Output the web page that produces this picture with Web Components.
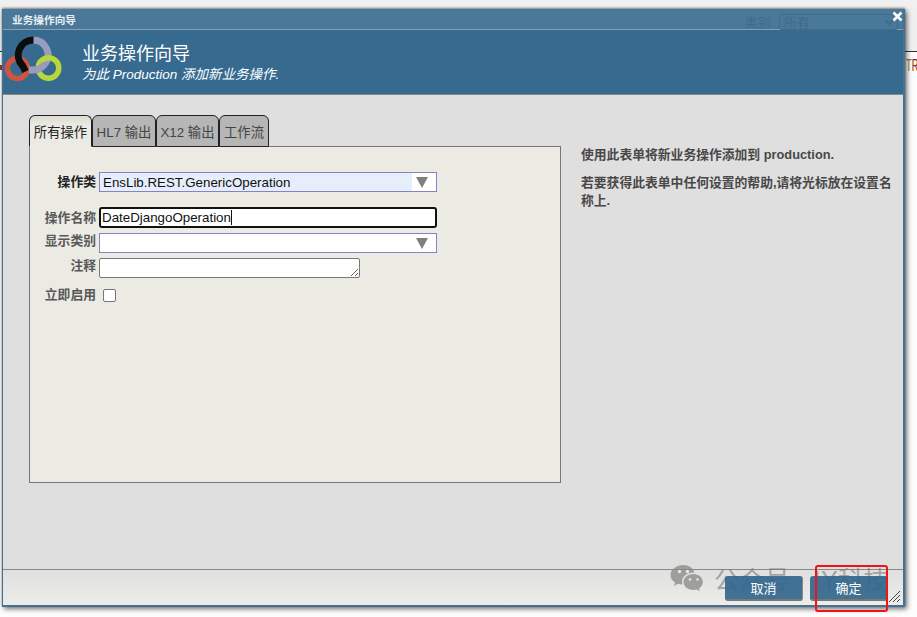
<!DOCTYPE html>
<html lang="zh">
<head>
<meta charset="utf-8">
<title>业务操作向导</title>
<style>
  html, body { margin: 0; height: 617px; overflow: hidden; }
  body { background: #fdfdfd; font-family: "Liberation Sans", "Noto Sans CJK SC", sans-serif; }
</style>
</head>
<body>
<wiz-page>
  <wiz-dialog caption="业务操作向导" heading="业务操作向导" sub="为此 Production 添加新业务操作.">
    <wiz-tabs slot="main">
      <wiz-form></wiz-form>
    </wiz-tabs>
    <wiz-help slot="side"></wiz-help>
    <wiz-mark slot="foot"></wiz-mark>
    <wiz-button slot="foot">取消</wiz-button>
    <wiz-button slot="foot">确定</wiz-button>
  </wiz-dialog>
</wiz-page>

<script>
  const FONT = '"Liberation Sans", "Noto Sans CJK SC", sans-serif';

  class WizPage extends HTMLElement {
    constructor() {
      super();
      this.attachShadow({ mode: "open" }).innerHTML = `
        <style>
          :host { display: block; position: relative; width: 917px; height: 617px; overflow: hidden; }
          .top { position: absolute; left: 0; right: 0; top: 0; height: 51px; background: #f0f0f0; border-bottom: 1px solid #333; }
          .stub { position: absolute; left: 0; top: 65px; width: 2px; height: 5px; background: #a03a30; }
          .tr { position: absolute; left: 906px; top: 57px; font: 16px ${FONT}; color: #8a2a10; transform: scaleX(.58); transform-origin: left top; }
          .tr b { font-weight: normal; color: #a07030; }
          .red { position: absolute; left: 815px; top: 565px; width: 69px; height: 43px;
                 border: 2px solid #f01414; border-radius: 3px; z-index: 4; }
        </style>
        <div class="top"></div>
        <div class="stub"></div>
        <div class="tr"><b>T</b>R</div>
        <slot></slot>
        <div class="red"></div>`;
    }
  }

  class WizDialog extends HTMLElement {
    constructor() {
      super();
      const root = this.attachShadow({ mode: "open" });
      root.innerHTML = `
        <style>
          :host { display: flex; flex-direction: column; position: absolute; left: 2px; top: 9px; width: 903px; height: 598px;
                  box-sizing: border-box; background: #dfdfdf; border: solid #457292; border-width: 0 2px 2px 1px;
                  box-shadow: 2px 2px 5px rgba(0,0,0,.55), 0 -1px 2px rgba(0,0,0,.4); font-family: ${FONT}; }
          .cap { height: 20px; flex: none; background: #4a7899; border-bottom: 1px solid #8a9fad; display: flex; align-items: center;
                 padding-left: 9px; position: relative; color: #e9eef2; font-size: 10.67px; font-weight: bold; }
          .ghost { position: absolute; left: 742px; top: 3px; display: flex; align-items: center; gap: 4px; color: #3f6b8b; font-size: 13px; font-weight: normal; }
          .ghost .box { box-sizing: border-box; width: 119px; height: 16px; border: 1px solid #406d8d; border-radius: 2px; line-height: 15px; padding-left: 4px; position: relative; }
          .ghost svg { position: absolute; right: 3px; top: 4px; }
          .x { position: absolute; left: 889px; top: 2px; width: 11px; height: 11px; }
          .head { height: 64px; flex: none; background: #366a8e; border-bottom: 1px solid #888; display: flex; color: #fff; }
          .logo { width: 79px; flex: none; position: relative; }
          .logo svg { position: absolute; left: 0; top: 0; }
          h1 { margin: 13px 0 0; font-size: 18px; font-weight: normal; line-height: 23px; }
          p { margin: 0; font-size: 13.5px; font-style: italic; line-height: 18px; }
          .body { flex: 1; display: flex; min-height: 0; }
          .main { width: 532px; flex: none; padding: 20px 0 0 26px; }
          .side { flex: 1; padding: 51px 0 0 20px; }
          .foot { height: 36px; flex: none; box-sizing: border-box; border-top: 1px solid #888; display: flex; justify-content: flex-end;
                  gap: 7px; padding: 6px 15px 0 0; background: linear-gradient(#e0e0e0, #ececea); position: relative; }
          .grip { position: absolute; right: 2px; bottom: 2px; }
        </style>
        <div class="cap">
          <span class="ctext"></span>
          <div class="ghost"><span>类别:</span><span class="box">所有<svg width="10" height="7" viewBox="0 0 10 7"><path d="M1 1l4 4 4-4" fill="none" stroke="#406d8d" stroke-width="2"/></svg></span></div>
          <svg class="x" viewBox="0 0 11 11"><path d="M1.500 1.500l8 8M9.500 1.500l-8 8" stroke="#fff" stroke-width="2.600"/></svg>
        </div>
        <div class="head">
          <div class="logo">
            <svg width="64" height="60" viewBox="3 30 64 60" fill="none">
              <circle cx="17.500" cy="68.500" r="10" stroke="#cf5540" stroke-width="5.500"/>
              <path d="M33 40a15 15 0 0 1 12 24" stroke="#9a9cbf" stroke-width="7"/>
              <circle cx="48.500" cy="68" r="10.300" stroke="#b9d63b" stroke-width="5.500"/>
              <path d="M45 64a15 15 0 0 1-12 6h-4" stroke="#9a9cbf" stroke-width="7"/>
              <path d="M33.500 40a15 15 0 0 0-11 25.500l3 6" stroke="#0c0c0c" stroke-width="7"/>
            </svg>
          </div>
          <div><h1></h1><p></p></div>
        </div>
        <div class="body">
          <div class="main"><slot name="main"></slot></div>
          <div class="side"><slot name="side"></slot></div>
        </div>
        <div class="foot">
          <slot name="foot"></slot>
          <svg class="grip" width="13" height="13" viewBox="0 0 13 13"><path d="M1 12L12 1M5 12l7-7M9 12l3-3" stroke="#444" stroke-width="1"/></svg>
        </div>`;
      root.querySelector(".ctext").textContent = this.getAttribute("caption");
      root.querySelector("h1").textContent = this.getAttribute("heading");
      root.querySelector("p").textContent = this.getAttribute("sub");
    }
  }

  class WizTabs extends HTMLElement {
    constructor() {
      super();
      const root = this.attachShadow({ mode: "open" });
      const tabs = [["所有操作", 63], ["HL7 输出", 64], ["X12 输出", 63], ["工作流", 50]];
      root.innerHTML = `
        <style>
          :host { display: block; width: 532px; font-size: 13.33px; }
          .bar { display: flex; height: 32px; position: relative; z-index: 1; margin-bottom: -1px; }
          .tab { box-sizing: border-box; height: 32px; border: 1px solid #222; border-radius: 6px 6px 0 0; background: #b6b6b6; color: #444;
                 display: flex; align-items: center; justify-content: center; padding-bottom: 0; white-space: nowrap; }
          .tab.on { background: linear-gradient(#dcdcd0, #ebeae3 30%); color: #222; border-bottom-color: #ebeae3; }
          .panel { box-sizing: border-box; height: 337px; background: #ebeae3; border: 1px solid #777; }
        </style>
        <div class="bar">${tabs.map((t, i) => `<div class="tab${i === 0 ? " on" : ""}" style="width:${t[1]}px">${t[0]}</div>`).join("")}</div>
        <div class="panel"><slot></slot></div>`;
    }
  }

  class WizForm extends HTMLElement {
    constructor() {
      super();
      const arrow = `<div class="arr"><svg width="12" height="11" viewBox="0 0 12 11"><path d="M0 0h12L6 11z" fill="#808080"/></svg></div>`;
      this.attachShadow({ mode: "open" }).innerHTML = `
        <style>
          :host { display: grid; grid-template-columns: 66px auto; column-gap: 3px; row-gap: 5px; padding: 25px 0 0 0;
                  font-size: 12.8px; font-weight: bold; color: #585858; justify-content: start; align-items: center; }
          .l { text-align: right; white-space: nowrap; line-height: 20px; }
          .l.up { line-height: 16px; padding-bottom: 4px; }
          .first { margin-bottom: 10px; color: #222; }
          .sel { box-sizing: border-box; width: 338px; height: 20px; background: #fff; border: 1px solid #8483c9; display: flex; align-items: center; font-size: 13.33px; font-weight: normal; color: #111; }
          .sel .v { flex: 1; align-self: stretch; line-height: 19px; padding-left: 3px; }
          .sel .v.hl { background: #e6eefb; }
          .sel .arr { width: 20px; padding-right: 4px; display: flex; justify-content: center; }
          .first-f { margin-bottom: 10px; }
          .inp { box-sizing: border-box; width: 338px; height: 21px; background: #fff; border: 2px solid #111; border-radius: 3px; line-height: 17px; padding-left: 1px; color: #111; font-size: 13.33px; font-weight: normal; display: flex; }
          .caret { width: 1px; height: 15px; background: #111; margin: 1px 0 0 0; }
          .ta { box-sizing: border-box; width: 261px; height: 20px; background: #fff; border: 1px solid #777; border-radius: 2px; position: relative; }
          .ta svg { position: absolute; right: 0; bottom: 0; }
          .cb { box-sizing: border-box; width: 13px; height: 13px; background: #fff; border: 1px solid #767676; border-radius: 2px; margin-left: 4px; }
          .check { margin-top: 2px; }
        </style>
        <div class="l first">操作类</div>
        <div class="sel first-f"><div class="v hl">EnsLib.REST.GenericOperation</div>${arrow}</div>
        <div class="l">操作名称</div>
        <div class="inp"><span>DateDjangoOperation</span><span class="caret"></span></div>
        <div class="l up">显示类别</div>
        <div class="sel"><div class="v"></div>${arrow}</div>
        <div class="l up">注释</div>
        <div class="ta"><svg width="9" height="9" viewBox="0 0 9 9"><path d="M1 8l7-7M5 8l3-3" stroke="#666" stroke-width="1"/></svg></div>
        <div class="l check">立即启用</div>
        <div class="check"><div class="cb"></div></div>`;
    }
  }

  class WizHelp extends HTMLElement {
    constructor() {
      super();
      this.attachShadow({ mode: "open" }).innerHTML = `
        <style>
          :host { display: block; width: 316px; font-size: 12.8px; font-weight: bold; line-height: 18px; color: #484848; }
          p { margin: 0 0 10px; }
        </style>
        <p>使用此表单将新业务操作添加到 production.</p>
        <p>若要获得此表单中任何设置的帮助,请将光标放在设置名称上.</p>`;
    }
  }

  class WizMark extends HTMLElement {
    constructor() {
      super();
      this.attachShadow({ mode: "open" }).innerHTML = `
        <style>
          :host { position: absolute; left: 667px; top: -10px; display: flex; align-items: center; gap: 9px;
                  font-size: 25px; letter-spacing: .4px; color: rgba(120,120,120,.6); white-space: nowrap; }
        </style>
        <svg width="35" height="28" viewBox="0 0 34 28">
          <path fill="rgba(135,135,130,.75)" d="M13 1C6 1 0 5.500 0 11c0 3.200 1.800 5.700 4.500 7.600L3.500 22l4-2.200c1.500.4 2.800.6 4.500.6-.3-1-.4-1.800-.4-2.700C11.600 12.500 16.500 8.500 23 8.500h1C22.700 4 18.300 1 13 1z"/>
          <path fill="rgba(135,135,130,.75)" d="M23 10c-5.500 0-10 3.600-10 8s4.500 8 10 8c1.200 0 2.200-.2 3.300-.5l3.200 1.800-.9-2.900c2.300-1.600 3.800-3.800 3.800-6.400 0-4.400-4.500-8-9.400-8z"/>
          <g fill="#e6e6e2"><circle cx="9" cy="7.500" r="1.700"/><circle cx="17" cy="7.500" r="1.700"/><circle cx="19.500" cy="15.500" r="1.300"/><circle cx="27" cy="15.500" r="1.300"/></g>
        </svg>
        <span>公众号 · IY科技</span>`;
    }
  }

  class WizButton extends HTMLElement {
    constructor() {
      super();
      this.attachShadow({ mode: "open" }).innerHTML = `
        <style>
          :host { display: flex; position: relative; align-items: center; justify-content: center; box-sizing: border-box; width: 78px; height: 25px;
                  background: rgba(50,102,140,.92); border-bottom: 2px solid #777; border-right: 1px solid #888; border-radius: 3px; color: #fff; font-size: 13px; }
        </style>
        <slot></slot>`;
    }
  }

  customElements.define("wiz-page", WizPage);
  customElements.define("wiz-dialog", WizDialog);
  customElements.define("wiz-tabs", WizTabs);
  customElements.define("wiz-form", WizForm);
  customElements.define("wiz-help", WizHelp);
  customElements.define("wiz-mark", WizMark);
  customElements.define("wiz-button", WizButton);
</script>
</body>
</html>
